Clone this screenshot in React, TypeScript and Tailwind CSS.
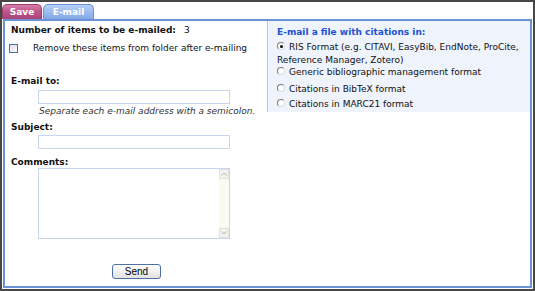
const formats = [
  { label: "Generic bibliographic management format", mt: "mt-0" },
  { label: "Citations in BibTeX format", mt: "mt-[5px]" },
  { label: "Citations in MARC21 format", mt: "mt-[3px]" },
];

function Radio({ checked = false }: { checked?: boolean }) {
  return (
    <span className="relative inline-flex w-[8px] h-[8px] shrink-0 rounded-full border border-t-[#7a7a7a] border-l-[#7a7a7a] border-r-[#dcdcdc] border-b-[#dcdcdc] bg-white items-center justify-center -translate-y-[1px]">
      {checked && <span className="w-[3px] h-[3px] rounded-full bg-black" />}
    </span>
  );
}

function Chevron({ up }: { up?: boolean }) {
  return (
    <div className="w-[10px] h-[10px] bg-[#f1f1ee] border border-[#e2e2dc] flex items-center justify-center">
      <svg width="6" height="4" viewBox="0 0 6 4">
        <path
          d={up ? "M0.5 3.5 L3 1 L5.5 3.5" : "M0.5 0.5 L3 3 L5.5 0.5"}
          fill="none"
          stroke="#b5b5b0"
          strokeWidth="1"
        />
      </svg>
    </div>
  );
}

export default function App() {
  return (
    <div className="w-[535px] h-[291px] border-2 border-[#474747] bg-white flex flex-col font-['DejaVu_Sans',sans-serif] text-[9px] text-[#111] leading-[12px]">
      {/* tabs */}
      <div className="flex h-[17px] items-end gap-px">
        <div className="w-[40px] h-[15px] rounded-t-[5px] border border-b-0 border-[#9c3d6c] bg-gradient-to-b from-[#d67fab] via-[#bb5589] to-[#a9437a] text-white font-bold flex items-center justify-center">
          Save
        </div>
        <div className="w-[51px] h-[15px] rounded-t-[5px] border border-b-0 border-[#6a92d4] bg-gradient-to-b from-[#b5d0f6] to-[#80a8e8] text-white font-bold flex items-center justify-center">
          E-mail
        </div>
      </div>

      {/* panel */}
      <div className="flex-1 mx-px mb-px border-2 border-[#6a92d4] flex items-start">
        {/* left column */}
        <div className="w-[262px] pt-[3px] pl-[6px]">
          <div className="h-[12px] flex">
            <span className="font-bold">Number of items to be e-mailed:</span>
            <span className="ml-[8px]">3</span>
          </div>
          <div className="h-[12px] mt-[6px] -ml-[2px] flex items-center">
            <span className="w-[9px] h-[9px] border border-[#4d6ea8] bg-gradient-to-br from-[#dfe4ec] to-[#f7f8fb]" />
            <span className="ml-[15px]">Remove these items from folder after e-mailing</span>
          </div>
          <div className="h-[12px] mt-[21px] font-bold">E-mail to:</div>
          <div className="ml-[27px] mt-[3px] w-[192px] h-[14px] border border-[#c6d6ef] bg-white" />
          <div className="ml-[28px] mt-px h-[12px] italic text-[#333]">
            Separate each e-mail address with a semicolon.
          </div>
          <div className="h-[12px] mt-[4px] font-bold">Subject:</div>
          <div className="ml-[27px] mt-[2px] w-[192px] h-[14px] border border-[#c6d6ef] bg-white" />
          <div className="h-[12px] mt-[7px] font-bold">Comments:</div>
          <div className="ml-[27px] w-[192px] h-[71px] border border-[#c6d6ef] bg-white flex justify-end">
            <div className="w-[10px] h-full bg-[#fbfaf1] flex flex-col justify-between">
              <Chevron up />
              <Chevron />
            </div>
          </div>
          <button className="ml-[101px] mt-[25px] w-[49px] h-[15px] rounded-[3px] border border-[#4f6fa8] bg-gradient-to-b from-white to-[#e2e2e2] font-['Liberation_Sans',sans-serif] text-[10px] leading-[13px] text-black flex items-center justify-center">
            Send
          </button>
        </div>

        {/* right column */}
        <div className="flex-1 border-l border-[#b3c7ea] bg-[#eef3fc] pt-[5px] pl-[9px] pb-[2px]">
          <div className="h-[12px] font-bold text-[#2052cf]">E-mail a file with citations in:</div>
          <div className="h-[12px] mt-[3px] flex items-center gap-[4px]">
            <Radio checked />
            <span>RIS Format (e.g. CITAVI, EasyBib, EndNote, ProCite,</span>
          </div>
          <div className="h-[12px] mt-px">Reference Manager, Zotero)</div>
          {formats.map((f) => (
            <div key={f.label} className={`h-[12px] ${f.mt} flex items-center gap-[4px]`}>
              <Radio />
              <span>{f.label}</span>
            </div>
          ))}
        </div>
      </div>
    </div>
  );
}
